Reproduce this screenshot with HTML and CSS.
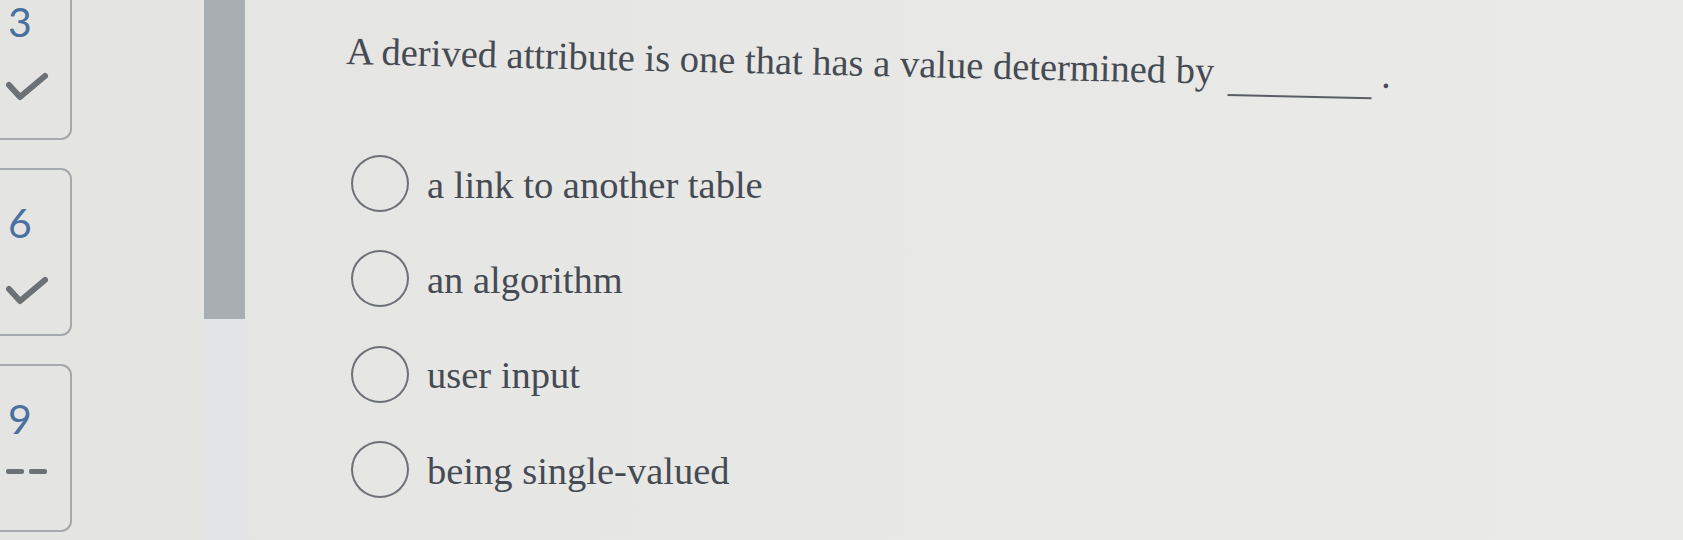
FILE: index.html
```html
<!DOCTYPE html>
<html lang="en">
<head>
<meta charset="utf-8">
<title>Quiz question</title>
<link rel="stylesheet" href="styles.css">
</head>
<body>
<div class="screen">
  <aside class="nav">
    <div class="card card-first">
      <span class="num">3</span>
      <svg class="check" viewBox="0 0 44 32" width="44" height="32"><path d="M4 14 L15 26 L40 5" fill="none" stroke="#6c7176" stroke-width="6" stroke-linecap="round" stroke-linejoin="round"/></svg>
    </div>
    <div class="card">
      <span class="num">6</span>
      <svg class="check" viewBox="0 0 44 32" width="44" height="32"><path d="M4 14 L15 26 L40 5" fill="none" stroke="#6c7176" stroke-width="6" stroke-linecap="round" stroke-linejoin="round"/></svg>
    </div>
    <div class="card">
      <span class="num">9</span>
      <div class="dashes"><span class="dash"></span><span class="dash"></span></div>
    </div>
  </aside>
  <div class="scroll"><div class="thumb"></div></div>
  <main class="quiz">
    <p class="question">A derived attribute is one that has a value determined by <span class="blank"></span> .</p>
    <ul class="options">
      <li class="option"><span class="radio"></span><span class="label">a link to another table</span></li>
      <li class="option"><span class="radio"></span><span class="label">an algorithm</span></li>
      <li class="option"><span class="radio"></span><span class="label">user input</span></li>
      <li class="option"><span class="radio"></span><span class="label">being single-valued</span></li>
    </ul>
  </main>
</div>
</body>
</html>
```

FILE: styles.css
```css
html, body {
  margin: 0;
  padding: 0;
  width: 1683px;
  height: 540px;
  overflow: hidden;
  background: #e6e6e4;
}

.screen {
  display: flex;
  height: 540px;
  background: linear-gradient(90deg, #e4e4e2 0%, #e7e7e5 40%, #eaeae8 100%);
}

.nav {
  width: 92px;
  margin-left: -20px;
  display: flex;
  flex-direction: column;
  gap: 28px;
  flex-shrink: 0;
}

.card {
  box-sizing: border-box;
  height: 168px;
  border: 2px solid #a4a8ac;
  border-radius: 11px;
  padding: 33px 0 0 26px;
  display: flex;
  flex-direction: column;
  align-items: flex-start;
}

.card-first {
  margin-top: -36px;
  height: 176px;
  padding-top: 36px;
}

.card-first .check {
  margin-top: 29px;
}

.num {
  font-family: Lato, "Open Sans", sans-serif;
  font-size: 41px;
  line-height: 40px;
  color: #4a70a0;
}

.check {
  margin-top: 32px;
  margin-left: -3px;
}

.dashes {
  display: flex;
  gap: 5px;
  margin-top: 30px;
  margin-left: -2px;
}

.dash {
  width: 18px;
  height: 5px;
  border-radius: 2px;
  background: #6c7176;
}

.scroll {
  width: 41px;
  margin-left: 132px;
  flex-shrink: 0;
  background: #e4e5e6;
}

.thumb {
  height: 319px;
  background: #a9aeb2;
}

.quiz {
  padding: 29px 0 0 101px;
  font-family: "Liberation Serif", "Times New Roman", serif;
  color: #464a51;
}

.question {
  margin: 0;
  font-size: 38.5px;
  line-height: 44px;
  white-space: nowrap;
  transform-origin: 0 35px;
  transform: rotate(1.3deg);
}

.blank {
  display: inline-block;
  width: 144px;
  height: 0;
  margin-left: 4px;
  border-bottom: 2px solid #5a5e64;
  vertical-align: -12px;
}

.options {
  list-style: none;
  margin: 60px 0 0 0;
  padding: 0;
}

.option {
  display: flex;
  align-items: center;
  height: 95.3px;
  font-size: 38.5px;
  line-height: 44px;
}

.radio {
  box-sizing: border-box;
  width: 58px;
  height: 57px;
  margin-left: 5px;
  border: 2px solid #6d7177;
  border-radius: 50%;
  flex-shrink: 0;
}

.label {
  margin-left: 18px;
  padding-top: 2px;
}
```
